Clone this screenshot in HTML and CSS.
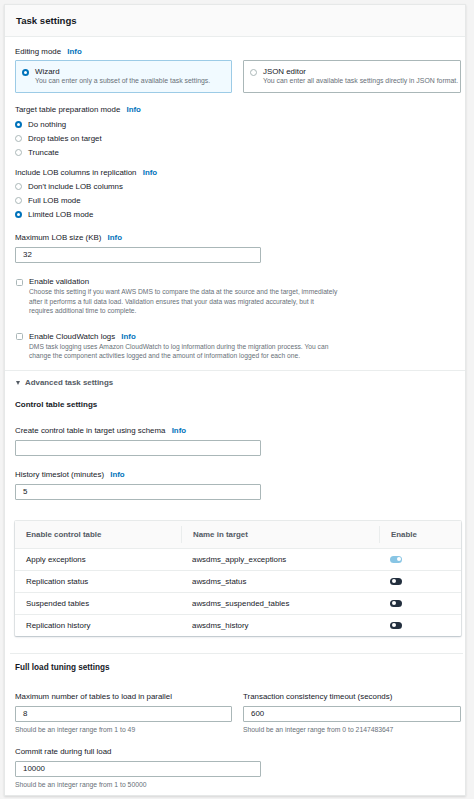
FILE: index.html
```html
<!DOCTYPE html>
<html>
<head>
<meta charset="utf-8">
<link rel="stylesheet" href="styles.css">
</head>
<body>
<div class="card">
  <div class="card-header">Task settings</div>

  <div class="section first">
    <div class="label">Editing mode <span class="info">Info</span></div>
    <div class="tiles">
      <div class="tile selected">
        <span class="radio on"></span>
        <div>
          <div class="tile-title">Wizard</div>
          <div class="tile-desc">You can enter only a subset of the available task settings.</div>
        </div>
      </div>
      <div class="tile">
        <span class="radio"></span>
        <div>
          <div class="tile-title">JSON editor</div>
          <div class="tile-desc">You can enter all available task settings directly in JSON format.</div>
        </div>
      </div>
    </div>

    <div class="label mt12">Target table preparation mode <span class="info">Info</span></div>
    <div class="radios">
      <div class="ropt"><span class="radio on"></span>Do nothing</div>
      <div class="ropt"><span class="radio"></span>Drop tables on target</div>
      <div class="ropt"><span class="radio"></span>Truncate</div>
    </div>

    <div class="label mt9">Include LOB columns in replication <span class="info">Info</span></div>
    <div class="radios r1">
      <div class="ropt"><span class="radio"></span>Don't include LOB columns</div>
      <div class="ropt"><span class="radio"></span>Full LOB mode</div>
      <div class="ropt"><span class="radio on"></span>Limited LOB mode</div>
    </div>

    <div class="label mt12">Maximum LOB size (KB) <span class="info">Info</span></div>
    <div class="input w-half">32</div>

    <div class="check mt14">
      <span class="box"></span>
      <div>
        <div class="check-title">Enable validation</div>
        <div class="check-desc wide">Choose this setting if you want AWS DMS to compare the data at the source and the target, immediately<br>after it performs a full data load. Validation ensures that your data was migrated accurately, but it<br>requires additional time to complete.</div>
      </div>
    </div>

    <div class="check mt16">
      <span class="box"></span>
      <div>
        <div class="check-title">Enable CloudWatch logs <span class="info">Info</span></div>
        <div class="check-desc">DMS task logging uses Amazon CloudWatch to log information during the migration process. You can change the component activities logged and the amount of information logged for each one.</div>
      </div>
    </div>
  </div>

  <div class="section second">
    <div class="expander"><span class="caret"></span>Advanced task settings</div>
    <div class="subhead mt12">Control table settings</div>

    <div class="label mt16">Create control table in target using schema <span class="info">Info</span></div>
    <div class="input w-half mt3"></div>

    <div class="label mt14">History timeslot (minutes) <span class="info">Info</span></div>
    <div class="input w-half">5</div>

    <div class="table">
      <div class="row head">
        <div class="cell">Enable control table</div>
        <div class="cell div">Name in target</div>
        <div class="cell div">Enable</div>
      </div>
      <div class="row">
        <div class="cell">Apply exceptions</div>
        <div class="cell">awsdms_apply_exceptions</div>
        <div class="cell"><span class="toggle on"></span></div>
      </div>
      <div class="row">
        <div class="cell">Replication status</div>
        <div class="cell">awsdms_status</div>
        <div class="cell"><span class="toggle"></span></div>
      </div>
      <div class="row">
        <div class="cell">Suspended tables</div>
        <div class="cell">awsdms_suspended_tables</div>
        <div class="cell"><span class="toggle"></span></div>
      </div>
      <div class="row last">
        <div class="cell">Replication history</div>
        <div class="cell">awsdms_history</div>
        <div class="cell"><span class="toggle"></span></div>
      </div>
    </div>

    <div class="divider"></div>

    <div class="subhead big mt9">Full load tuning settings</div>

    <div class="cols mt19">
      <div>
        <div class="label">Maximum number of tables to load in parallel</div>
        <div class="input mt1">8</div>
        <div class="hint">Should be an integer range from 1 to 49</div>
      </div>
      <div>
        <div class="label">Transaction consistency timeout (seconds)</div>
        <div class="input mt1">600</div>
        <div class="hint">Should be an integer range from 0 to 2147483647</div>
      </div>
    </div>

    <div class="label mt13">Commit rate during full load</div>
    <div class="input w-half mt3">10000</div>
    <div class="hint">Should be an integer range from 1 to 50000</div>
  </div>
</div>
</body>
</html>
```

FILE: styles.css
```css
* { box-sizing: border-box; }
html, body { margin: 0; padding: 0; }
body {
  background: #f4f4f4;
  font-family: "Liberation Sans", Arial, sans-serif;
  color: #16191f;
  font-size: 7.9px;
  width: 474px;
  height: 799px;
  overflow: hidden;
}
.card {
  margin: 4px 0 0 4px;
  width: 462px;
  height: 792px;
  background: #fff;
  border: 1px solid #e6e8e8;
  box-shadow: 0 1px 2px rgba(0,0,0,0.12);
}
.card-header {
  height: 32px;
  background: #fafafa;
  border-bottom: 1px solid #eaeded;
  padding: 0 11px;
  font-size: 9.6px;
  font-weight: bold;
  line-height: 32px;
}
.section { padding: 0 4px 0 10px; }
.section.first { padding-top: 10px; padding-bottom: 9px; border-bottom: 1px solid #eaeded; }
.section.second { padding-top: 7px; }

.label { line-height: 10px; }
.info { color: #0073bb; font-weight: bold; margin-left: 4px; }
.mt1 { margin-top: 1px; }
.mt3 { margin-top: 3px; }
.mt9 { margin-top: 9px; }
.mt12 { margin-top: 12px; }
.mt13 { margin-top: 13px; }
.mt14 { margin-top: 14px; }
.mt16 { margin-top: 16px; }
.mt19 { margin-top: 19px; }

.tiles {
  margin-top: 3px;
  display: grid;
  grid-template-columns: 217px 218px;
  column-gap: 11px;
}
.tile {
  height: 33px;
  border: 1px solid #aab7b8;
  border-radius: 1px;
  display: flex;
  align-items: flex-start;
  padding: 6px 6px 0 6px;
}
.tile.selected { background: #f1faff; border-color: #9ccbe6; }
.tile .radio { margin-top: 1.5px; margin-right: 6px; }
.tile-title { line-height: 9px; }
.tile-desc { font-size: 6.9px; color: #687078; line-height: 10px; white-space: nowrap; }

.radio {
  flex: none;
  display: inline-block;
  width: 7px;
  height: 7px;
  border-radius: 50%;
  border: 1px solid #aab7b8;
  background: #fff;
}
.radio.on { border: 2.2px solid #0073bb; }

.radios { margin-top: 2px; }
.radios.r1 { margin-top: 1px; }
.ropt {
  height: 14px;
  display: flex;
  align-items: center;
}
.ropt .radio { margin-right: 6px; }

.input {
  height: 16px;
  border: 1px solid #aab7b8;
  border-radius: 1px;
  padding: 0 7px;
  line-height: 14px;
  margin-top: 4px;
  background: #fff;
}
.w-half { width: 246px; }

.check { display: flex; align-items: flex-start; }
.box {
  flex: none;
  width: 7px;
  height: 7px;
  border: 1px solid #aab7b8;
  border-radius: 1.5px;
  margin: 1.5px 6px 0 1px;
}
.check-title { line-height: 10px; }
.check-desc {
  font-size: 6.7px;
  color: #687078;
  line-height: 9.5px;
  width: 318px;
}
.check-desc.wide { width: 340px; }

.expander {
  line-height: 10px;
  color: #545b64;
  font-weight: bold;
  display: flex;
  align-items: center;
}
.caret {
  width: 0; height: 0;
  border-left: 2.5px solid transparent;
  border-right: 2.5px solid transparent;
  border-top: 4px solid #545b64;
  margin: 0 5px 0 1px;
}
.subhead { font-size: 8px; font-weight: bold; line-height: 10px; }
.subhead.big { font-size: 8.2px; }

.table {
  margin-top: 21px;
  width: 446px;
  box-shadow: 0 1px 2px rgba(0,31,63,0.22), 0 0 0 1px #eaeded;
  border-radius: 1px;
}
.row {
  display: grid;
  grid-template-columns: 166px 198px 82px;
  height: 22px;
  border-top: 1px solid #eaeded;
  align-items: center;
}
.row.head {
  height: 27px;
  background: #fafafa;
  border-top: none;
  font-weight: bold;
  color: #545b64;
}
.cell {
  padding-left: 11px;
  display: flex;
  align-items: center;
  height: 100%;
}
.head .cell.div { border-left: 1px solid #eaeded; height: 17px; }
.toggle {
  position: relative;
  display: inline-block;
  width: 12px;
  height: 7px;
  border-radius: 4px;
  background: #232f3e;
}
.toggle::after {
  content: "";
  position: absolute;
  left: 1.5px;
  top: 1.5px;
  width: 4px;
  height: 4px;
  border-radius: 50%;
  background: #fff;
}
.toggle.on { background: #88c5e4; }
.toggle.on::after { left: auto; right: 1.5px; }

.divider {
  margin: 17px 0 0 -5px;
  width: 453px;
  border-top: 1px solid #eaeded;
}

.cols {
  display: grid;
  grid-template-columns: 217px 218px;
  column-gap: 11px;
}
.hint {
  font-size: 6.8px;
  color: #687078;
  line-height: 8px;
  margin-top: 4px;
}
```
